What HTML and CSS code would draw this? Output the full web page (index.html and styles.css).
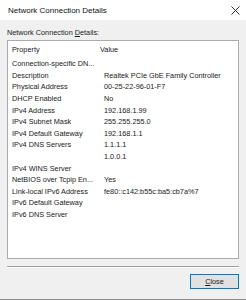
FILE: index.html
```html
<!DOCTYPE html>
<html lang="en">
<head>
  <meta charset="utf-8" />
  <title>Network Connection Details</title>
  <link rel="stylesheet" href="styles.css">
</head>
<body>
  <div class="window">
    <div class="titlebar">
      <span class="title">Network Connection Details</span>
      <svg class="close-x" width="9" height="9" viewBox="0 0 9 9">
        <path d="M0.5 0.5L8.5 8.5M8.5 0.5L0.5 8.5" stroke="#333" stroke-width="1" fill="none"/>
      </svg>
    </div>

    <div class="content">
      <div class="label">Network Connection <u>D</u>etails:</div>
      <div class="list">
        <div class="list-head">
          <span class="col-prop">Property</span>
          <span class="col-val">Value</span>
        </div>
        <div class="rows">
          <span>Connection-specific DN...</span><span></span>
          <span>Description</span><span>Realtek PCIe GbE Family Controller</span>
          <span>Physical Address</span><span>00-25-22-96-01-F7</span>
          <span>DHCP Enabled</span><span>No</span>
          <span>IPv4 Address</span><span>192.168.1.99</span>
          <span>IPv4 Subnet Mask</span><span>255.255.255.0</span>
          <span>IPv4 Default Gateway</span><span>192.168.1.1</span>
          <span>IPv4 DNS Servers</span><span>1.1.1.1</span>
          <span></span><span>1.0.0.1</span>
          <span>IPv4 WINS Server</span><span></span>
          <span>NetBIOS over Tcpip En...</span><span>Yes</span>
          <span>Link-local IPv6 Address</span><span>fe80::c142:b55c:ba5:cb7a%7</span>
          <span>IPv6 Default Gateway</span><span></span>
          <span>IPv6 DNS Server</span><span></span>
        </div>
      </div>

      <div class="separator"></div>

      <div class="buttons">
        <button class="btn default"><u>C</u>lose</button>
      </div>
    </div>
  </div>
</body>
</html>
```

FILE: styles.css
```css
:root{
  --face:#f0f0f0;
  --text:#1a1a1a;
  --list-border:#a9abb0;
  --accent:#0078d7;
}

html,body{height:100%}
body{
  margin:0;
  font-family:"Liberation Sans",Arial,sans-serif;
  color:var(--text);
  background:var(--face);
}

.window{
  width:246px; height:300px; box-sizing:border-box;
  display:flex; flex-direction:column;
  background:var(--face);
  border-bottom:1px solid #8c8c8c;
}

.titlebar{
  height:20px; flex:none;
  display:flex; align-items:center; justify-content:space-between;
  padding:0 6px 0 8px;
  background:#fff;
  font-size:8px;
}
.title{ color:#111; }
.close-x{ display:block; }

.content{
  flex:1;
  display:flex; flex-direction:column;
  padding:7px 7px 0 7px;
  font-size:7.3px;
}

.label{ line-height:12px; height:13px; }
.label u, .btn u{ text-decoration-thickness:1px; text-underline-offset:1px; }

.list{
  height:219px; box-sizing:border-box;
  border:1px solid var(--list-border);
  background:#fff;
}
.list-head{
  height:17px;
  display:grid; grid-template-columns:88px 1fr;
  align-items:center;
}
.col-prop{ padding-left:4px; }
.col-val{ padding-left:4px; }

.rows{
  display:grid;
  grid-template-columns:96px 1fr;
  grid-auto-rows:11.6px;
  align-items:center;
  white-space:nowrap;
}
.rows span:nth-child(odd){ padding-left:4px; }

.separator{
  margin-top:7px;
  height:1px;
  background:#a0a0a0;
  border-bottom:1px solid #fff;
}

.buttons{
  display:flex; justify-content:flex-end;
  padding-top:6px;
}
.btn{
  width:49px; height:15px; box-sizing:border-box;
  padding:0;
  font:inherit; font-size:7.3px; color:var(--text);
  background:#e1e1e1;
  border:1px solid var(--accent);
}
```
